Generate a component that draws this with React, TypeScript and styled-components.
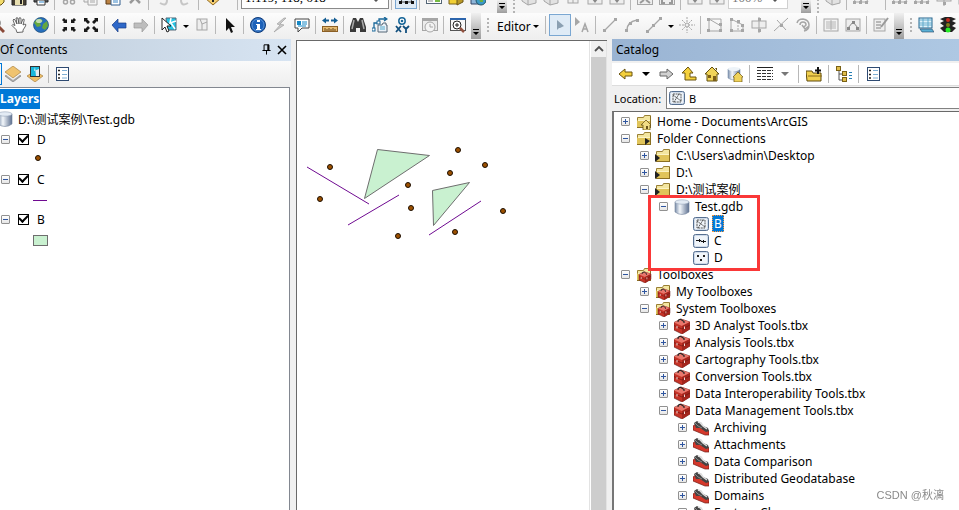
import React from "react";
import styled, { createGlobalStyle } from "styled-components";

const Global = createGlobalStyle`
  * { box-sizing: border-box; }
  body { margin: 0; overflow: hidden; background: #f0f0f0; }
  body, button, input { font-family: "Noto Sans", "Noto Sans CJK SC", sans-serif; font-size: 12px; color: #000; }
  svg { display: block; flex: none; }
`;

const Shell = styled.div`
  height: 100vh;
  display: flex;
  flex-direction: column;
  overflow: hidden;
`;

const Strip = styled.div<{ $top?: boolean }>`
  flex: none;
  display: flex;
  align-items: ${(p) => (p.$top ? "flex-end" : "stretch")};
  height: ${(p) => (p.$top ? 13 : 26)}px;
  margin-left: -14px;
  overflow: hidden;
  background: ${(p) => (p.$top ? "#f4f4f4" : "linear-gradient(#fcfcfc, #eeeeee)")};
`;

const Tool = styled.button<{ $active?: boolean; $raised?: boolean }>`
  flex: none;
  width: 22px;
  height: 22px;
  margin: ${(p) => (p.$raised ? "0 0 4px" : "1px 0")};
  padding: 0;
  display: flex;
  align-items: center;
  justify-content: center;
  background: ${(p) => (p.$active ? "#dfebf6" : "transparent")};
  border: ${(p) => (p.$active ? "1px solid #7aa7d2" : "none")};
`;

const Separator = styled.span`
  flex: none;
  width: 6px;
  height: 18px;
  margin: 3px 0;
  background: linear-gradient(#b8b8b8, #b8b8b8) 2px 0 / 1px 100% no-repeat;
`;

const CaretButton = styled.button<{ $wide?: boolean; $dim?: boolean; $raised?: boolean }>`
  flex: none;
  width: ${(p) => (p.$wide ? 16 : 11)}px;
  height: 22px;
  margin-bottom: ${(p) => (p.$raised ? 4 : 0)}px;
  padding: 0;
  border: 0;
  background: transparent;
  display: flex;
  align-items: center;
  justify-content: center;
  align-self: ${(p) => (p.$raised ? "flex-end" : "center")};
  &::after {
    content: "";
    border: ${(p) => (p.$wide ? 4 : 3)}px solid transparent;
    border-top-color: ${(p) => (p.$dim ? "#777" : "#000")};
    border-bottom: 0;
  }
`;

const Overflow = styled.button`
  flex: none;
  align-self: stretch;
  width: 10px;
  padding: 0 0 3px;
  border: 0;
  display: flex;
  align-items: flex-end;
  justify-content: center;
  background: linear-gradient(#f0f0f0, #9c9c9c);
`;

const Grip = styled.span`
  flex: none;
  width: 11px;
  height: 16px;
  align-self: center;
  background: repeating-linear-gradient(#b4b4b4 0 2px, transparent 2px 4px) 6px 0 / 2px 100% no-repeat;
`;

const Gap = styled.span<{ $w: number }>`
  flex: none;
  width: ${(p) => p.$w}px;
`;

const Combo = styled.label<{ $w: number; $dim?: boolean }>`
  flex: none;
  width: ${(p) => p.$w}px;
  height: 22px;
  margin-bottom: 4px;
  display: flex;
  align-items: center;
  justify-content: space-between;
  padding: 0 4px 0 3px;
  border: 1px solid ${(p) => (p.$dim ? "#d0d0d0" : "#8a8a8a")};
  background: #fff;
  input {
    min-width: 0;
    flex: 1;
    height: 14px;
    padding: 0;
    border: 0;
    outline: 0;
    background: transparent;
    font: 13px "Liberation Serif", serif;
    color: ${(p) => (p.$dim ? "#777" : "#000")};
  }
`;

const MenuButton = styled.button`
  flex: none;
  border: 0;
  padding: 0;
  background: transparent;
  display: flex;
  align-items: center;
  width: 46px;
  gap: 2px;
  &::after {
    content: "";
    border: 3px solid transparent;
    border-top-color: #000;
    border-bottom: 0;
  }
`;

const Workspace = styled.main`
  flex: 1;
  min-height: 0;
  display: grid;
  grid-template-columns: 291px minmax(0, 311px) minmax(0, 1fr);
  column-gap: 5px;
`;

const Panel = styled.section`
  min-width: 0;
  min-height: 0;
  display: flex;
  flex-direction: column;
`;

const PanelTitle = styled.header<{ $active?: boolean }>`
  flex: none;
  height: 22px;
  display: flex;
  align-items: center;
  padding: ${(p) => (p.$active ? "0 4px" : "0 1px 0 0")};
  background: ${(p) => (p.$active ? "linear-gradient(90deg, #9ab4d3, #aec8e3)" : "linear-gradient(90deg, #bfcddb, #d7e4f2)")};
  h2 {
    margin: 0 auto 0 0;
    font-size: 12px;
    font-weight: 400;
    line-height: 22px;
  }
`;

const SmallButton = styled.button`
  width: 16px;
  height: 16px;
  padding: 0;
  border: 0;
  background: transparent;
  display: flex;
  align-items: center;
  justify-content: center;
`;

const TocTools = styled.div`
  flex: none;
  height: 26px;
  display: flex;
  align-items: center;
  background: linear-gradient(#fafafa, #eeeeee);
  > button:first-child {
    width: 2px;
    border: 1px solid #0078d7;
    border-left: 0;
  }
`;

const TocList = styled.ul`
  flex: 1;
  list-style: none;
  margin: 0 1px 0 0;
  padding: 1px 0 0;
  background: #fff;
  border-top: 1px solid #828790;
  border-right: 1px solid #828790;
`;

const TocRow = styled.li<{ $symbol?: boolean }>`
  height: 20px;
  display: flex;
  align-items: center;
  padding-left: ${(p) => (p.$symbol ? 33 : 0)}px;
  white-space: nowrap;
`;

const Selected = styled.strong`
  background: #0078d7;
  color: #fff;
  min-width: 40px;
  line-height: 20px;
`;

const LayerLabel = styled.label`
  display: flex;
  align-items: center;
  gap: 8px;
  margin-left: 8px;
`;

const Check = styled.input`
  appearance: none;
  width: 11px;
  height: 11px;
  margin: 0;
  border: 1px solid #000;
  background: #fff;
  display: grid;
  place-items: center;
  &:checked::after {
    content: "";
    width: 7px;
    height: 4px;
    border-left: 2px solid #000;
    border-bottom: 2px solid #000;
    transform: rotate(-45deg) translate(1px, -1px);
  }
`;

const Expander = styled.button`
  flex: none;
  width: 9px;
  height: 9px;
  padding: 0;
  border: 1px solid #919191;
  border-radius: 1px;
  background: linear-gradient(#fff, #e6e6e6);
  display: grid;
  place-items: center;
`;

const MapPanel = styled.section`
  min-width: 0;
  display: flex;
  margin-top: 1px;
  border-left: 1px solid #696969;
  border-top: 1px solid #696969;
  background: #fff;
  overflow: hidden;
`;

const MapCanvas = styled.div`
  flex: 1;
  min-width: 0;
  overflow: hidden;
  border-right: 1px solid #e3e3e3;
`;

const ScrollTrack = styled.div`
  flex: none;
  width: 17px;
  display: flex;
  flex-direction: column;
  background: #f0f0f0;
  border-left: 1px solid #fff;
  border-right: 1px solid #e3e3e3;
  button { width: 15px; }
`;

const Thumb = styled.div`
  flex: 1;
  background: #cdcdcd;
`;

const CatalogTools = styled.div`
  flex: none;
  height: 23px;
  margin-top: 2px;
  display: flex;
  align-items: center;
  gap: 1px;
  padding-left: 3px;
  background: #fff;
  border-bottom: 1px solid #ddd;
`;

const LocationRow = styled.div`
  flex: none;
  display: flex;
  align-items: center;
  gap: 8px;
  height: 22px;
  margin: 1px 0 2px 2px;
  label { font-size: 11px; flex: none; width: 44px; white-space: nowrap; }
`;

const LocationField = styled.div`
  flex: 1;
  height: 22px;
  display: flex;
  align-items: center;
  gap: 4px;
  padding-left: 2px;
  background: #fff;
  border: 1px solid #828282;
  border-right: 0;
  input {
    flex: 1;
    min-width: 0;
    border: 0;
    padding: 0;
    outline: 0;
    font-size: 11px;
  }
`;

const Tree = styled.ul`
  position: relative;
  flex: 1;
  min-height: 0;
  overflow: hidden;
  list-style: none;
  margin: 0;
  padding: 1px 0 0;
  background: #fff;
  border-left: 2px solid #767676;
  border-top: 1px solid #696969;
`;

const TreeRow = styled.li<{ $depth: number }>`
  height: 17px;
  display: flex;
  align-items: center;
  padding-left: ${(p) => 7 + p.$depth * 19}px;
  white-space: nowrap;
  line-height: 17px;
  > svg { margin: 0 5px 0 6px; }
`;

const NoExpander = styled.span`
  width: 9px;
  flex: none;
`;

const Picked = styled.span`
  background: #0078d7;
  color: #fff;
  outline: 1px dotted #ff9a3c;
  outline-offset: -1px;
  padding: 0 2px;
  margin-left: -2px;
`;

const Callout = styled.div`
  position: absolute;
  left: 34px;
  top: 83px;
  width: 112px;
  height: 76px;
  border: 3px solid #fa3838;
`;

const Watermark = styled.div`
  position: fixed;
  right: 15px;
  bottom: 6px;
  font-size: 11px;
  line-height: 18px;
  color: #8a8a8a;
  font-family: "Liberation Sans", "Noto Sans CJK SC", sans-serif;
`;

const G = "#a6a6a6";
const sq = (x: number, y: number, c = G, s = 3) => <rect key={`${x}-${y}`} x={x} y={y} width={s} height={s} fill={c} />;

const folder = (
  <>
    <path d="M1.500 3.500h6l1-2h6v12h-13z" fill="#f3e6a0" stroke="#9a8034" />
    <path d="M1 6.500h13.500v7H1z" fill="#e0c45a" />
    <path d="M2 6.500h12" stroke="#fbf3c4" />
    <path d="M1 13.500h14M14.500 2v12" stroke="#8a6f22" />
  </>
);
const redBox = (
  <>
    <path d="M0 4.500L7 1l9 3v7l-8 5-8-4z" fill="#c63327" stroke="#5c1512" strokeWidth=".6" />
    <path d="M0 4.500L7 1l9 3-8 4z" fill="#e8766b" />
    <path d="M8 8l8-4v7l-8 5z" fill="#a3251d" />
    <path d="M0 7.500l8 3.500 8-4" stroke="#6d1712" fill="none" strokeWidth=".7" />
    <path d="M4 4q0-3 3-2.500l3 2V5" stroke="#262626" fill="none" strokeWidth="1.200" />
    <path d="M3 8v2.500M10.500 8.500V11" stroke="#f1dcd8" />
  </>
);
const page = (
  <>
    <rect x=".5" y="1.500" width="15" height="13" rx="2" fill="#cfdbea" stroke="#566f90" />
    <rect x="2" y="3" width="12" height="10" rx="1" fill="#f0f5fa" />
  </>
);

const art: Record<string, React.ReactNode> = {
  folder,
  open: <><path d="M1 5h11l3-2v9l-3 3H1z" fill="#f3dc6c" stroke="#665015" /></>,
  save: <><path d="M1 1h14v14H1z" fill="#474033" stroke="#222" /><path d="M4 9h8v6H4z" fill="#e8dfb0" /><path d="M9 10h2v4H9z" fill="#222" /><path d="M3 2h10v6H3z" fill="#d8cd96" /></>,
  print: <><path d="M1 6h14v6H1z" fill="#55565a" stroke="#222" /><path d="M4 10h8v5H4z" fill="#fff" stroke="#333" /><path d="M6 12h5" stroke="#38c" /></>,
  cut: <><path d="M5 1l5 9M11 1L6 10" stroke={G} /><circle cx="4.500" cy="12" r="2" stroke={G} fill="none" strokeWidth="1.500" /><circle cx="11.500" cy="12" r="2" stroke={G} fill="none" strokeWidth="1.500" /></>,
  copy: <><path d="M1 1h9v11H1z" fill="#eee" stroke={G} /><path d="M5 4h9v11H5z" fill="#f4f4f4" stroke={G} /><path d="M7 8h5M7 10h5M7 12h5" stroke={G} /></>,
  paste: <><path d="M1 2h11v12H1z" fill="#b98143" stroke="#5c3b17" /><path d="M6 5h9v10H6z" fill="#fff" stroke="#335f8e" /><path d="M8 8h5M8 10h5M8 12h5" stroke="#3a87c8" /></>,
  del: <path d="M3 3l10 10M13 3L3 13" stroke="#999" strokeWidth="2.500" />,
  undo: <path d="M3 6q9-3 9 4t-7 3M3 6l4-4M3 6l4 3" fill="none" stroke="#c6c6c6" strokeWidth="2" />,
  redo: <path d="M13 6q-9-3-9 4t7 3M13 6L9 2M13 6L9 9" fill="none" stroke="#c6c6c6" strokeWidth="2" />,
  add: <><path d="M0 8l8-7 8 7-8 7z" fill="#f4ce70" stroke="#936920" /><path d="M8 4v8M4 8h8" stroke="#222" strokeWidth="2" /></>,
  editor: <><path d="M3 12L6 4l5 1 3 7z" fill="none" stroke="#444" />{[1, 7, 13].map((x) => sq(x, 11, "#111"))}</>,
  win: <><rect x=".5" y="1.500" width="15" height="12" fill="#fff" stroke="#567" /><path d="M2 11h5" stroke="#888" /><path d="M9 11h5" stroke="#7b4" strokeWidth="2" /></>,
  cat: <><path d="M1 5h9v9H1z" fill="#f1cf34" stroke="#77611b" /><path d="M9 4l6 2v6l-6 3z" fill="#b99826" stroke="#6b5617" /></>,
  web: <><path d="M1 6h8v8H1z" fill="#8db5d8" stroke="#346" /><circle cx="11" cy="10" r="5" fill="#3b9ac8" stroke="#256" /><path d="M9 8h4v4h-3z" fill="#6aaf42" /></>,
  zoomTool: <><circle cx="6" cy="6" r="5" fill="#def" stroke="#777" strokeWidth="1.500" /><path d="M10 10l5 5" stroke="#8a4938" strokeWidth="3" /></>,
  hand: <path d="M6 15.500l-1-3-4-4q0-2 3 0L2 3q1-2 2 0l2 4-1-6q2-1 2 1l1 5V1q2-1 2 1v5l2-5q2 0 1 2l-1 4 2-1q2 0 0 3l-2 3v2z" fill="#fff" stroke="#444" strokeWidth=".8" />,
  globe: <><circle cx="8" cy="8" r="7.500" fill="#276fbd" stroke="#194773" strokeWidth=".7" /><path d="M1 6q3-5 7-4l2 2-3 2 1 3-4 1-2-3zM10 7l4-3 1 5-3 4-3-2z" fill="#66a83e" /><ellipse cx="6" cy="4" rx="3" ry="2" fill="#fff" opacity=".6" /></>,
  shrink: <path d="M6 2v4H2l1-1-2-2 2-2 2 2zM10 2v4h4l-1-1 2-2-2-2-2 2zM6 14v-4H2l1 1-2 2 2 2 2-2zM10 14v-4h4l-1 1 2 2-2 2-2-2z" fill="#1a1a1a" />,
  grow: <path d="M1 1h4L4 2l3 3-2 2-3-3-1 1zM15 1h-4l1 1-3 3 2 2 3-3 1 1zM1 15h4l-1-1 3-3-2-2-3 3-1-1zM15 15h-4l1-1-3-3 2-2 3 3 1-1z" fill="#1a1a1a" />,
  shrinkGray: <><rect x=".5" y="1.500" width="15" height="13" fill="#eee" stroke={G} /><path d="M3 4l4 4M13 4L9 8M3 13l4-3M13 13l-4-3" stroke="#999" strokeWidth="2" /></>,
  growGray: <><rect x=".5" y="1.500" width="15" height="13" fill="#eee" stroke={G} /><path d="M3 7V4h3M13 7V4h-3M3 10v3h3M13 10v3h-3" fill="none" stroke="#999" strokeWidth="2" /></>,
  back: <path d="M1 8l6-6v4h8v5H7v4z" fill="#2e68c8" stroke="#173c86" strokeWidth=".7" />,
  fwd: <path d="M15 8L9 2v4H1v5h8v4z" fill="#bdbdbd" stroke="#999" strokeWidth=".7" />,
  select: <><path d="M5 1h10v12H6z" fill="#25c4e4" stroke="#567" /><path d="M10 1l-1 5 6-2M10 6l4 6" stroke="#fff" fill="none" strokeWidth="1.500" /><path d="M1 1v12l3-3 2 5 2-1-2-5h4z" fill="#fff" stroke="#222" /></>,
  clear: <><rect x="3" y="2" width="10" height="11" fill="#eee" stroke={G} /><path d="M6 2l2 5 5-2M8 7v6" stroke={G} fill="none" /></>,
  pointer: <path d="M4 1v13l3-3 2 5 2-1-2-5h4z" fill="#111" />,
  info: <><circle cx="8" cy="8" r="7.500" fill="#1d62ba" stroke="#123d7a" /><circle cx="8" cy="8" r="6" fill="none" stroke="#80ace0" strokeWidth=".6" /><path d="M7 3h3v2H7zM6 7h4v5h1v1H6v-1h1V8H6z" fill="#fff" /></>,
  bolt: <path d="M12 1L5 7l3 1-6 7 10-7-4-1 6-6z" fill="#c9c9c9" stroke="#999" strokeWidth=".6" />,
  callout: <><path d="M1 2h14v9H8l-4 4v-4H1z" fill="#fff" stroke="#444" /><rect x="3" y="4" width="4" height="4" fill="#1688c5" /><path d="M8 5h5M8 7h5M4 9h8" stroke="#1688c5" /></>,
  measure: <><path d="M0 3.500l4-3v2h3v2H4v2zM16 3.500l-4-3v2H9v2h3v2z" fill="#145d93" /><rect x=".5" y="9.500" width="15" height="5" fill="#e6ba70" stroke="#8b5f25" /><path d="M3 14v-3M5 14v-2M7 14v-3M9 14v-2M11 14v-3M13 14v-2" stroke="#65441a" /></>,
  bino: <><path d="M3 1h3l2 4 2-4h3l3 9v5h-6v-4H6v4H0v-5z" fill="#3b3b3b" /><path d="M4 3L2 12M12 3l2 9" stroke="#aaa" strokeWidth="1.500" /></>,
  route: <><path d="M2 13V6h5V2h7M12 0l3 2-3 2" fill="none" stroke="#196799" strokeWidth="1.300" />{[0, 5].map((x) => <rect key={x} x={x} y={x ? 4 : 11} width="3" height="3" fill="#fff" stroke="#196799" />)}<path d="M6 8h4l1-2h3v2h1v7H6z" fill="#eaf1f8" stroke="#567" /><path d="M8 10h5M8 12h5" stroke="#5ac" /></>,
  xy: <><circle cx="8" cy="4" r="3.200" fill="#fff" stroke="#196799" strokeWidth="1.500" /><circle cx="8" cy="4" r="1.300" fill="#196799" /><path d="M2 9l5 6M7 9l-5 6M9 9l3 3 3-3M12 12v4" stroke="#12507e" strokeWidth="1.800" fill="none" /></>,
  clock: <><rect x=".5" y="1.500" width="15" height="12" fill="#ececec" stroke={G} /><path d="M1 3h14" stroke={G} strokeWidth="2" /><circle cx="8" cy="10" r="5" fill="#f4f4f4" stroke={G} /><path d="M8 7v3h3" fill="none" stroke={G} /></>,
  magwin: <><rect x=".5" y="1.500" width="15" height="12" fill="#f8f8f8" stroke="#555" /><path d="M0 2h16" stroke="#2c65ad" strokeWidth="2" /><circle cx="7" cy="8" r="4" fill="#fff" stroke="#222" /><path d="M7 6v4M5 8h4" stroke="#222" /><path d="M10 11l4 4" stroke="#92513f" strokeWidth="2.500" /></>,
  edit: <path d="M5 3v10l2-2h1l4-2z" fill="#8ba0b2" />,
  editA: <><path d="M1 0v9l5-4z" fill={G} /><path d="M8 15l3-8 3 8M9 12h4" stroke={G} fill="none" strokeWidth="1.500" /></>,
  line: <><path d="M3 13L13 3" stroke={G} strokeWidth="1.300" />{sq(1, 12)}{sq(12, 1)}</>,
  arc: <><path d="M3 13Q3 5 13 3" stroke={G} fill="none" strokeWidth="1.500" />{sq(1, 12)}{sq(5, 5)}{sq(12, 2)}</>,
  trace: <><path d="M2 14L14 2" stroke={G} strokeWidth="1.300" />{sq(0, 13)}{sq(6, 7)}{sq(13, 0)}</>,
  burst: <><path d="M8 0v16M0 8h16M3 3l10 10M13 3L3 13" stroke={G} strokeDasharray="2 1" /><circle cx="8" cy="8" r="2" fill="#eee" stroke={G} /></>,
  poly: <><path d="M2 2v12h12V9zM2 2h12v7" stroke={G} fill="none" />{sq(0, 1)}{sq(0, 12)}{sq(12, 12)}{sq(12, 6)}</>,
  reshape: <><path d="M2 2v12h12V8z" stroke={G} fill="none" /><path d="M9 5v9" stroke={G} strokeDasharray="2 1" />{sq(1, 1)}{sq(1, 12)}{sq(12, 12)}{sq(8, 3)}{sq(12, 7)}</>,
  cutPoly: <><rect x="1" y="4" width="14" height="7" fill="#eee" stroke={G} /><path d="M8 0v16" stroke={G} />{sq(7, 1)}{sq(7, 12)}</>,
  splitLine: <><path d="M1 14L15 1M4 3l9 10" stroke={G} />{sq(7, 7)}</>,
  rotate: <path d="M2 6q1-4 6-4 6 1 6 6t-5 6M5 8q0-3 3-3t3 3l-2 2M7 8l3 4 4-3" fill="none" stroke={G} strokeWidth="1.500" />,
  table: <><rect x="1" y="2" width="14" height="12" fill="#f2f2f2" stroke={G} /><path d="M3 5h10M3 7h10M3 9h10M3 11h10M8 3v10" stroke={G} strokeWidth=".8" /></>,
  sketch: <><rect x="1" y="2" width="14" height="12" fill="#eee" stroke={G} /><path d="M3 11l5-6 5 6" stroke="#888" fill="none" />{sq(2, 10, "#888")}{sq(7, 4, "#888")}{sq(11, 10, "#888")}</>,
  template: <><rect x="1" y="2" width="11" height="12" fill="#eee" stroke={G} /><path d="M3 5h5M3 8h5M3 11h5" stroke={G} strokeWidth="1.500" /><path d="M8 10l7-9" stroke="#999" strokeWidth="2" /></>,
  db: <><path d="M1 3h14v10q-7 5-14 0z" fill="url(#metal)" stroke="#74839c" strokeWidth=".6" /><ellipse cx="8" cy="3" rx="7" ry="2.200" fill="#e3ebf4" stroke="#95a4b8" strokeWidth=".6" /></>,
  blueTable: <><rect x="1" y="1" width="13" height="10" fill="#dff2fa" stroke="#24658d" /><path d="M1 3h13M1 6h13M1 8h13M5 1v10M10 1v10" stroke="#4b9fc4" strokeWidth=".8" /><path d="M2 12h12l2 3H4z" fill="#5ab0d5" stroke="#246" strokeWidth=".6" /></>,
  traffic: <><path d="M5 0h6l5 2-4 2 4 2-4 3 4 2-4 4H4l-4-4 4-2-4-3 4-2-4-2z" fill="#222" /><circle cx="8" cy="3" r="2" fill="#c52a1d" /><circle cx="8" cy="8" r="2" fill="#7f7d18" /><circle cx="8" cy="13" r="2.500" fill="#25ed25" /></>,
  layers: <><path d="M0 10l8-5 8 5-8 6z" fill="#aaa" stroke="#777" strokeWidth=".6" /><path d="M0 8l8-5 8 5-8 6z" fill="#f4f4f4" /><path d="M0 6l8-6 8 6-8 6z" fill="#efc370" stroke="#9c7332" strokeWidth=".6" /></>,
  source: <><path d="M0 10l8-5 8 5-8 6z" fill="#efc06a" stroke="#9c7332" strokeWidth=".6" /><rect x="3.500" y=".5" width="9" height="10" fill="#1bb8dc" stroke="#333" /><path d="M8 1l-1 4 5-2v7H9z" fill="#e8eef0" /></>,
  options: <><rect x="1.500" y="1.500" width="12" height="13" fill="#fff" stroke="#2e4a72" /><path d="M3 4.500h2M3 8.500h2M3 12h2" stroke="#222" strokeWidth="1.500" /><path d="M7 4.500h5M7 8.500h5M7 12h5" stroke="#7daed4" /></>,
  goldBack: <path d="M1 8l6-5v3h7v4H7v3z" fill="#f3cf3c" stroke="#6b5410" />,
  grayFwd: <path d="M15 8L9 3v3H2v4h7v3z" fill="#d0d0d0" stroke="#666" />,
  up: <path d="M1 7l6-6 5 6H9v4h6v3H4V7z" fill="#f5d13c" stroke="#6b5410" />,
  home: <><path d="M1 8l7-7 7 7h-2v7H3V8z" fill="#f1d458" stroke="#63500f" /><path d="M9 10h3v5H9zM4 9h3v3H4z" fill="#7c5e17" /><path d="M11 2h2v3z" fill="#63500f" /></>,
  dbHome: <><path d="M1 3h12v9q-6 4-12 0z" fill="url(#metal)" stroke="#7d94af" strokeWidth=".6" /><ellipse cx="7" cy="3" rx="6" ry="2" fill="#edf3f8" /><path d="M6 11l5-5 5 5h-1v5H7v-5z" fill="#efd25a" stroke="#6a5516" strokeWidth=".7" /></>,
  grid: <><path d="M0 1.500h16" stroke="#222" /><path d="M0 4.500h16M0 7.500h16M0 10.500h16M0 13.500h16" stroke="#333" strokeDasharray="4 1" /></>,
  folderPlus: <><path d="M0 5h6l1 2h8v8H1z" fill="#f1d04e" stroke="#5f4a0f" /><path d="M2 10h14" stroke="#8a6b19" /><path d="M12 1v7M9 4.500h6" stroke="#111" strokeWidth="2" /></>,
  tree: <><path d="M3 5v9h5M3 8h5" fill="none" stroke="#555" />{sq(0, 0, "#7a6115", 5)}{sq(1, 1, "#e0bd4a", 3)}{sq(6, 5, "#7a6115", 5)}{sq(7, 6, "#e0bd4a", 3)}{sq(6, 11, "#7a6115", 5)}{sq(7, 12, "#e0bd4a", 3)}<path d="M13 6.500h3M13 9.500h3M13 12.500h3" stroke="#277fb4" /></>,
  folderHome: <>{folder}<path d="M5 11l5-5 5 5h-1v5H7v-5z" fill="#f1dc85" stroke="#68531a" strokeWidth=".8" /><path d="M10 12h2v3h-2z" fill="#68531a" /></>,
  folderLink: <>{folder}<path d="M9 7v7l5-4z" fill="#222" /></>,
  folderShort: <>{folder}<path d="M0 6v8l5-4z" fill="#222" /></>,
  folderBox: <>{folder}<g transform="translate(3 4) scale(.75)">{redBox}</g></>,
  redBox,
  toolset: <><path d="M0 6l3-2 13 7v4h-4L0 10z" fill="#d5382b" stroke="#701d15" strokeWidth=".7" /><path d="M1 3l3-2 3 2 1 2 7 3 1 3-3 1-6-4-4 0z" fill="#444" /><path d="M5 2l3 1 2 3 4 3" stroke="#dcdcdc" fill="none" strokeWidth="1.500" /><path d="M2 3l3 3 4 2" stroke="#8a8a8a" fill="none" /></>,
  fcPoly: <>{page}<path d="M4 4h8v8H4zM4 5l8 6M10 4l-5 8" fill="none" stroke="#333" strokeWidth=".8" strokeDasharray="2 .6" /></>,
  fcLine: <>{page}<path d="M3 7.500h5v1h5M6.500 6v3M10.500 7v3" fill="none" stroke="#111" /></>,
  fcPoint: <>{page}{sq(4, 5, "#222", 2)}{sq(10, 5, "#222", 2)}{sq(7, 9, "#222", 2)}</>,
  grayBox: <><path d="M1 4l8-2 6 4v7l-8 2-6-4z" fill="#e2e2e2" stroke={G} /><path d="M1 4l6 4v7M7 8l8-2" fill="none" stroke={G} /></>,
  grayWin: <><rect x="1" y="2" width="14" height="12" fill="#eee" stroke={G} /><path d="M5 9l3 4 3-4z" fill="#888" /></>,
  topo: <><path d="M1 12l4-8 3 8 3-8 4 8z" fill="none" stroke={G} />{[0, 6, 12].map((x) => sq(x, 11))}</>,
  pin: <><path d="M5 1h6v7H5zM3 8h10M8 8v5" fill="none" stroke="#000" strokeWidth="1.200" /><path d="M10 1v7" stroke="#000" strokeWidth="2" /></>,
  close: <path d="M4 4l8 8M12 4l-8 8" stroke="#000" strokeWidth="1.600" />,
  chevUp: <path d="M4 10l4-4 4 4" fill="none" stroke="#505050" strokeWidth="1.800" />,
  chevDown: <path d="M5 8l3 3 3-3" fill="none" stroke="#555" strokeWidth="1.500" />,
};

const Icon = ({ name, size = 16 }: { name: string; size?: number }) => (
  <svg width={size} height={size} viewBox="0 0 16 16" fill="none" aria-hidden="true">{art[name]}</svg>
);

const Toggle = ({ open }: { open: boolean }) => (
  <Expander aria-label={open ? "Collapse" : "Expand"}>
    <svg width="7" height="7" viewBox="0 0 7 7" shapeRendering="crispEdges" aria-hidden="true">
      <path d={open ? "M1 3h5v1H1z" : "M1 3h2V1h1v2h2v1H4v2H3V4H1z"} fill="#2f56a0" />
    </svg>
  </Expander>
);

const More = () => (
  <Overflow aria-label="More">
    <svg width="8" height="8" viewBox="0 0 8 8" aria-hidden="true"><path d="M1 1h6v1H1zM1 4h6L4 7z" fill="#000" /></svg>
  </Overflow>
);

/* "|" is a separator, "v" a drop-down arrow, ":" a grip, ">" the overflow button, "+name" a pressed tool. */
const Tools = ({ items, raised }: { items: string; raised?: boolean }) => (
  <>
    {items.split(" ").map((t, i) => {
      if (t === "|") return <Separator key={i} />;
      if (t === "v") return <CaretButton key={i} $raised={raised} aria-label="Options" />;
      if (t === ":") return <Grip key={i} />;
      if (t === ">") return <More key={i} />;
      const active = t[0] === "+";
      const name = active ? t.slice(1) : t;
      return <Tool key={i} $active={active} $raised={raised} aria-label={name}><Icon name={name} /></Tool>;
    })}
  </>
);

type Node = [number, string, string, "open" | "closed" | "leaf"];
const nodes: Node[] = [
  [0, "folderHome", "Home - Documents\\ArcGIS", "closed"],
  [0, "folderLink", "Folder Connections", "open"],
  [1, "folderShort", "C:\\Users\\admin\\Desktop", "closed"],
  [1, "folderShort", "D:\\", "closed"],
  [1, "folderShort", "D:\\测试案例", "open"],
  [2, "db", "Test.gdb", "open"],
  [3, "fcPoly", "B", "leaf"],
  [3, "fcLine", "C", "leaf"],
  [3, "fcPoint", "D", "leaf"],
  [0, "folderBox", "Toolboxes", "open"],
  [1, "folderBox", "My Toolboxes", "closed"],
  [1, "folderBox", "System Toolboxes", "open"],
  [2, "redBox", "3D Analyst Tools.tbx", "closed"],
  [2, "redBox", "Analysis Tools.tbx", "closed"],
  [2, "redBox", "Cartography Tools.tbx", "closed"],
  [2, "redBox", "Conversion Tools.tbx", "closed"],
  [2, "redBox", "Data Interoperability Tools.tbx", "closed"],
  [2, "redBox", "Data Management Tools.tbx", "open"],
  [3, "toolset", "Archiving", "closed"],
  [3, "toolset", "Attachments", "closed"],
  [3, "toolset", "Data Comparison", "closed"],
  [3, "toolset", "Distributed Geodatabase", "closed"],
  [3, "toolset", "Domains", "closed"],
  [3, "toolset", "Feature Class", "closed"],
];

const points = [[33, 126], [23, 158], [111, 144], [114, 167], [101, 195], [161, 109], [188, 124], [153, 132], [206, 170], [158, 191]];

const Dot = ({ x, y }: { x: number; y: number }) => (
  <circle cx={x} cy={y} r="2.500" fill="#9c5000" stroke="#1c0e00" />
);

const symbols: Record<string, React.ReactNode> = {
  D: <Dot x={5} y={7} />,
  C: <path d="M0 9.500h14" stroke="#6f0a91" />,
  B: <rect x=".5" y="4.500" width="14" height="10" fill="#c9f1d0" stroke="#6e6e6e" />,
};

export default function App() {
  return (
    <Shell>
      <Global />
      <svg width="0" height="0" aria-hidden="true">
        <defs>
          <linearGradient id="metal">
            <stop offset="0" stopColor="#7c8fab" />
            <stop offset=".35" stopColor="#f3f7fb" />
            <stop offset="1" stopColor="#5d7090" />
          </linearGradient>
        </defs>
      </svg>
      <Strip $top>
        <Tools raised items="open save print | cut copy paste del | undo redo | add v |" />
        <Combo $w={148}><input aria-label="Map scale" defaultValue="1:119, 118, 618" /><Icon name="chevDown" /></Combo>
        <Tools raised items="| +editor | win cat web" />
        <Gap $w={8} />
        <Tools raised items="> : grayBox grayBox clear grayWin grayWin | shrinkGray growGray | grayWin grayWin" />
        <Combo $w={60} $dim><input aria-label="Zoom" defaultValue="100%" /><Icon name="chevDown" /></Combo>
        <Gap $w={13} />
        <Tools raised items="> : grayBox | topo v | topo topo cutPoly table" />
      </Strip>
      <Strip>
        <Tools items="zoomTool hand globe | shrink grow | back fwd | select v clear | pointer | info bolt callout | measure | bino route xy | clock | magwin" />
        <Gap $w={2} />
        <Tools items="> :" />
        <Gap $w={5} />
        <MenuButton>Editor</MenuButton>
        <Tools items="| +edit editA | line arc trace v burst | poly reshape cutPoly splitLine rotate | table sketch | template" />
        <Gap $w={2} />
        <Tools items="> : blueTable traffic" />
      </Strip>
      <Workspace>
        <Panel>
          <PanelTitle>
            <h2>Of Contents</h2>
            <SmallButton aria-label="Auto hide"><Icon name="pin" size={13} /></SmallButton>
            <SmallButton aria-label="Close"><Icon name="close" /></SmallButton>
          </PanelTitle>
          <TocTools>
            <Tool aria-label="List by drawing order" />
            <Tool aria-label="List by source"><Icon name="layers" /></Tool>
            <Tool aria-label="List by visibility"><Icon name="source" /></Tool>
            <Separator />
            <Tool aria-label="Options"><Icon name="options" /></Tool>
          </TocTools>
          <TocList>
            <TocRow><Selected>Layers</Selected></TocRow>
            <TocRow>
              <svg width="18" height="16" viewBox="3 0 18 16" aria-hidden="true">{art.db}</svg>
              D:\测试案例\Test.gdb
            </TocRow>
            {["D", "C", "B"].map((n) => (
              <React.Fragment key={n}>
                <TocRow>
                  <Gap $w={1} />
                  <Toggle open />
                  <LayerLabel><Check type="checkbox" defaultChecked />{n}</LayerLabel>
                </TocRow>
                <TocRow $symbol><svg width="16" height="16" viewBox="0 0 16 16" aria-hidden="true">{symbols[n]}</svg></TocRow>
              </React.Fragment>
            ))}
          </TocList>
        </Panel>
        <MapPanel aria-label="Map">
          <MapCanvas>
            <svg width="292" height="469" viewBox="0 0 292 469" role="img" aria-label="Map features">
              <g fill="#c9f1d0" stroke="#6e6e6e">
                <path d="M80.500 108.500L132.500 114.500L67.500 157.500z" />
                <path d="M135.500 149.500L172.500 141.500L136.500 184.500z" />
              </g>
              <path d="M10 126L72 163M51 184L102 154M132 194L184 160" stroke="#6f0a91" />
              {points.map(([x, y]) => <Dot key={`${x}-${y}`} x={x} y={y} />)}
            </svg>
          </MapCanvas>
          <ScrollTrack><SmallButton aria-label="Scroll up"><Icon name="chevUp" /></SmallButton><Thumb /></ScrollTrack>
        </MapPanel>
        <Panel>
          <PanelTitle $active><h2>Catalog</h2></PanelTitle>
          <CatalogTools>
            <Tool aria-label="Back"><Icon name="goldBack" /></Tool>
            <CaretButton $wide aria-label="History" />
            <Tools items="grayFwd up home dbHome | grid" />
            <CaretButton $wide $dim aria-label="View" />
            <Gap $w={1} />
            <Tools items="| folderPlus | tree | options" />
          </CatalogTools>
          <LocationRow>
            <label htmlFor="location">Location:</label>
            <LocationField><Icon name="fcPoly" /><input id="location" defaultValue="B" /></LocationField>
          </LocationRow>
          <Tree>
            {nodes.map(([depth, icon, text, state], i) => (
              <TreeRow key={i} $depth={depth}>
                {state === "leaf" ? <NoExpander /> : <Toggle open={state === "open"} />}
                <Icon name={icon} />
                {icon === "fcPoly" ? <Picked>{text}</Picked> : <span>{text}</span>}
              </TreeRow>
            ))}
            <Callout />
          </Tree>
        </Panel>
      </Workspace>
      <Watermark>CSDN @秋漓</Watermark>
    </Shell>
  );
}
